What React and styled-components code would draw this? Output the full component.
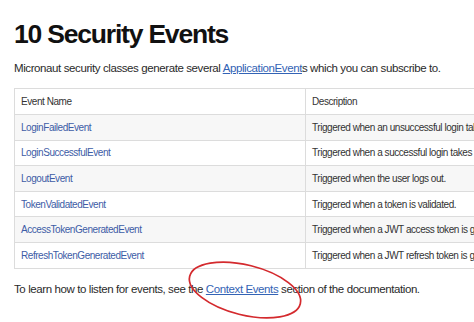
import React from "react";
import styled, { createGlobalStyle } from "styled-components";

const GlobalStyle = createGlobalStyle`
  html {
    overflow: hidden;
  }
  body {
    margin: 0;
    padding: 0;
    background: #ffffff;
    font-family: "Liberation Sans", Arial, Helvetica, sans-serif;
    color: #222;
  }
`;

const ROWS = [
  ["LoginFailedEvent", "Triggered when an unsuccessful login takes place."],
  ["LoginSuccessfulEvent", "Triggered when a successful login takes place."],
  ["LogoutEvent", "Triggered when the user logs out."],
  ["TokenValidatedEvent", "Triggered when a token is validated."],
  ["AccessTokenGeneratedEvent", "Triggered when a JWT access token is generated."],
  ["RefreshTokenGeneratedEvent", "Triggered when a JWT refresh token is generated."],
];

const App = () => (
  <>
    <GlobalStyle />
    <Page>
      <Title>10 Security Events</Title>
      <Lead>
        Micronaut security classes generate several{" "}
        <Link href="#">ApplicationEvent</Link>s which you can subscribe to.
      </Lead>
      <Table>
        <colgroup>
          <col style={{ width: 291 }} />
          <col />
        </colgroup>
        <thead>
          <tr>
            <Th>Event Name</Th>
            <Th>Description</Th>
          </tr>
        </thead>
        <tbody>
          {ROWS.map(([name, desc], i) => (
            <Row key={name} $shaded={i % 2 === 0}>
              <Td>
                <CodeLink href="#">{name}</CodeLink>
              </Td>
              <Td>{desc}</Td>
            </Row>
          ))}
        </tbody>
      </Table>
      <Footer>
        To learn how to listen for events, see the{" "}
        <Marked>
          <Link href="#">Context Events</Link>
          <Circle viewBox="0 0 140 70">
            <ellipse
              cx="70"
              cy="35"
              rx="57"
              ry="25"
              transform="rotate(14 70 35)"
              fill="none"
              stroke="#d42a2e"
              strokeWidth="1.7"
            />
          </Circle>
        </Marked>{" "}
        section of the documentation.
      </Footer>
    </Page>
  </>
);

const Page = styled.div`
  width: 560px;
  min-height: 322px;
  padding: 16px 0 0 14px;
  box-sizing: border-box;
`;

const Title = styled.h1`
  margin: 0;
  font-size: 26.5px;
  line-height: 36px;
  font-weight: 700;
  letter-spacing: -1.2px;
  color: #111;
`;

const Lead = styled.p`
  margin: 8px 0 0;
  font-size: 11.5px;
  line-height: 16px;
  letter-spacing: -0.4px;
  color: #2a2a2a;
`;

const Link = styled.a`
  color: #3363b5;
  text-decoration: underline;
  text-underline-offset: 1px;
`;

const Table = styled.table`
  margin-top: 12px;
  width: 540px;
  border-collapse: collapse;
  table-layout: fixed;
  border: 1px solid #dcdcdc;
  font-size: 10px;
  letter-spacing: -0.45px;
`;

const Th = styled.th`
  text-align: left;
  font-weight: 400;
  color: #333;
  height: 25px;
  padding: 0 6px;
  border: 1px solid #dcdcdc;
  white-space: nowrap;
  overflow: hidden;
`;

const Row = styled.tr`
  background: ${(p) => (p.$shaded ? "#f7f7f7" : "#ffffff")};
`;

const Td = styled.td`
  height: 24.6px;
  padding: 0 6px;
  border: 1px solid #dcdcdc;
  color: #333;
  white-space: nowrap;
  overflow: hidden;
`;

const CodeLink = styled.a`
  color: #3d5ca6;
  text-decoration: none;
`;

const Footer = styled.p`
  margin: 12px 0 0;
  font-size: 11.5px;
  line-height: 16px;
  letter-spacing: -0.4px;
  color: #2a2a2a;
`;

const Marked = styled.span`
  position: relative;
`;

const Circle = styled.svg`
  position: absolute;
  left: -31px;
  top: -28px;
  width: 140px;
  height: 70px;
  pointer-events: none;
  overflow: visible;
`;

export default App;
